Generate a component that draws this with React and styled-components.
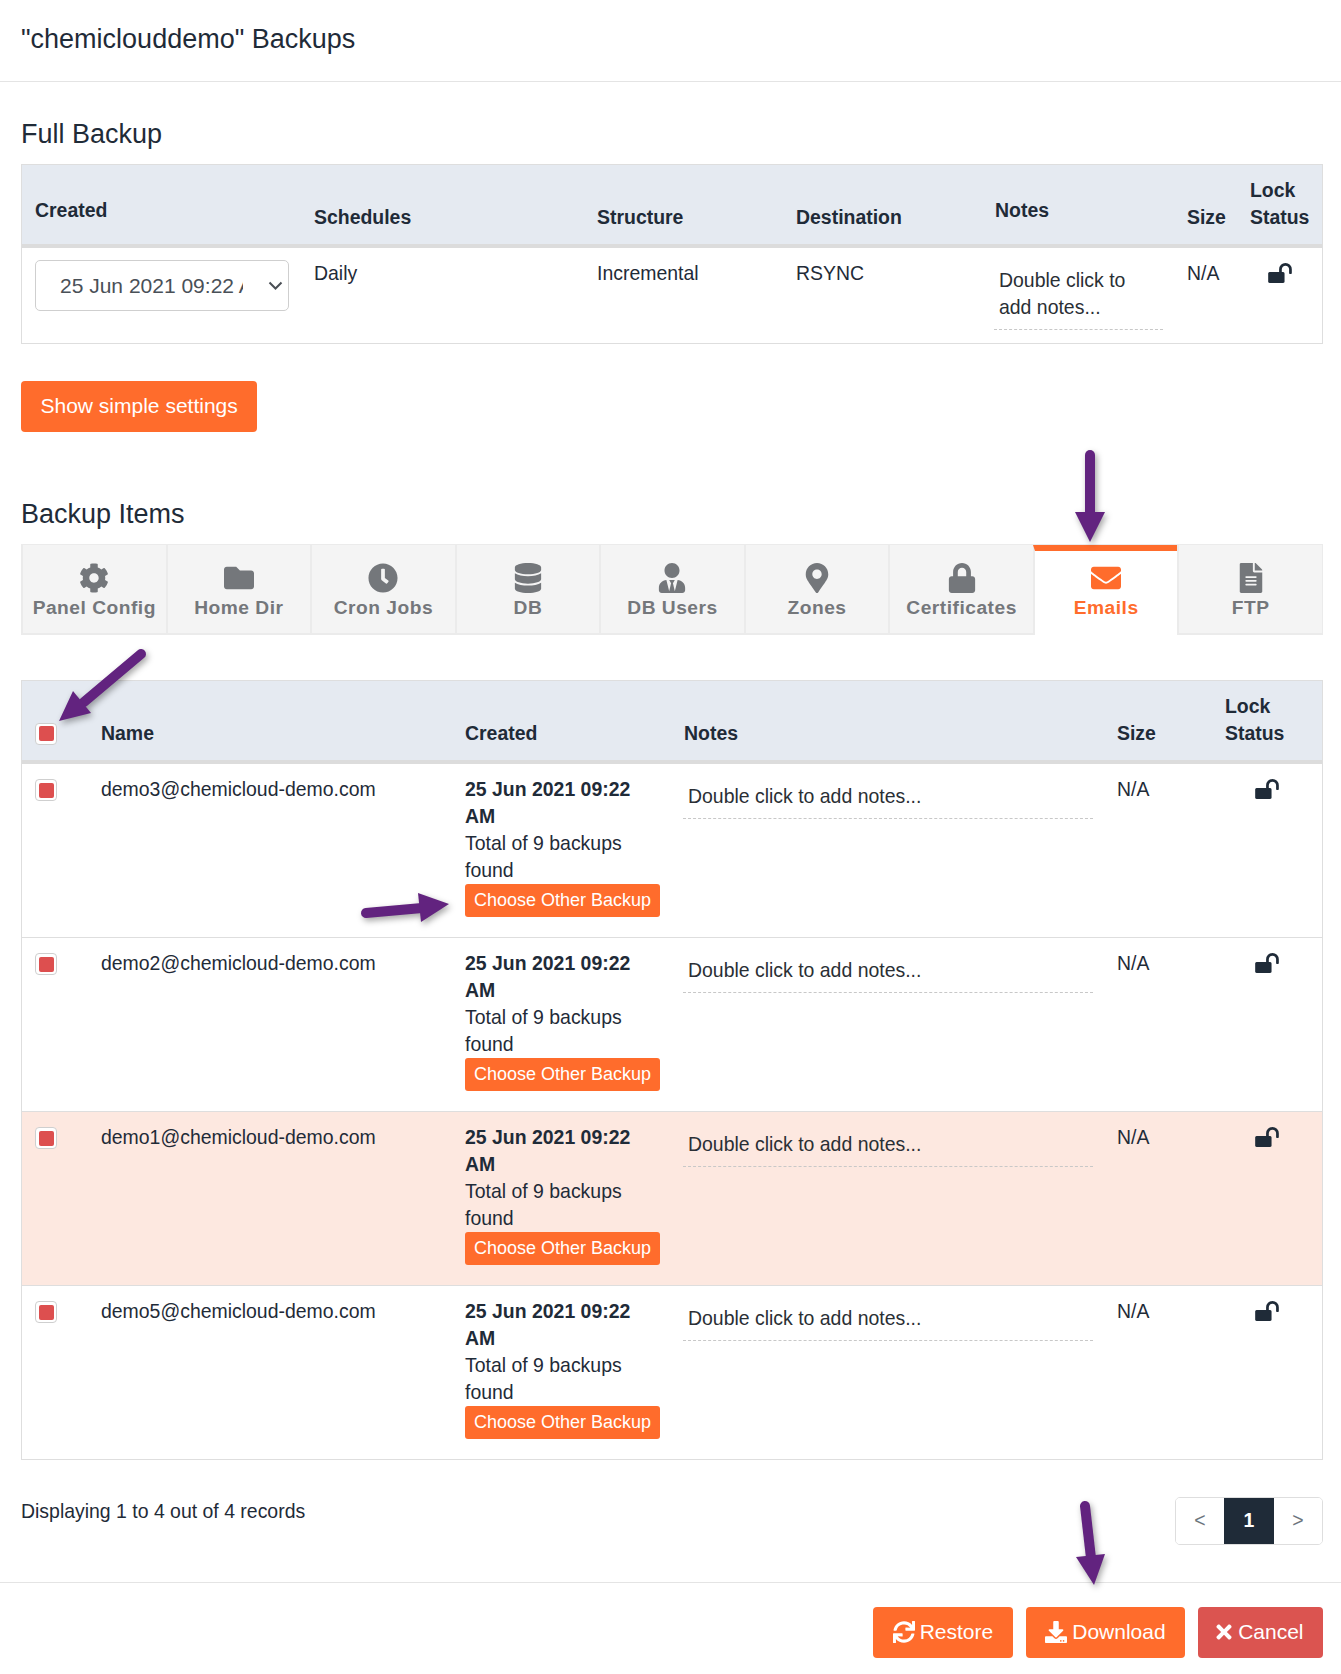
import React from "react"
import styled, { createGlobalStyle } from "styled-components"
import {
  FaCog, FaFolder, FaClock, FaDatabase, FaUserTie, FaMapMarkerAlt, FaLock,
  FaEnvelope, FaFileAlt, FaSync, FaDownload, FaTimes,
} from "react-icons/fa"

const orange = "#ff6c2c"
const ink = "#1f2b38"

const GlobalStyle = createGlobalStyle`
  html, body { margin: 0; padding: 0; background: #fff; }
  body {
    font-family: "Liberation Sans", Arial, sans-serif;
    font-size: 19.45px;
    line-height: 27px;
    color: ${ink};
  }
  * { box-sizing: border-box; }
`

const Page = styled.div`
  position: relative;
  width: 1341px;
  height: 1674px;
  overflow: hidden;
`

const Header = styled.header`
  height: 82px;
  padding: 22px 21px 0;
  border-bottom: 1px solid #e4e4e4;
`

const PageTitle = styled.h1`
  margin: 0;
  font-size: 27px;
  line-height: 34px;
  font-weight: 400;
`

const Body = styled.main`
  padding: 35px 18px 0 21px;
`

const SectionTitle = styled.h2`
  margin: ${(p) => p.$top || 0}px 0 13px;
  font-size: 27px;
  line-height: 34px;
  font-weight: 400;
`

const Table = styled.table`
  width: 100%;
  table-layout: fixed;
  border-collapse: separate;
  border-spacing: 0;
  border: 1px solid #dedede;
  margin-top: ${(p) => p.$top || 0}px;
`

const Th = styled.th`
  background: #e5eaf1;
  border-bottom: 4px solid #dcdcdc;
  padding: 12px 13px ${(p) => (p.$raised ? 20 : 13)}px;
  text-align: left;
  vertical-align: bottom;
  font-weight: 700;
  font-size: 19.45px;
  line-height: 27px;
`

const Td = styled.td`
  padding: 12.5px 13px 19.5px;
  vertical-align: top;
  text-align: ${(p) => (p.$center ? "center" : "left")};
  background: ${(p) => (p.$hot ? "#fde8e0" : "transparent")};
  border-top: ${(p) => (p.$line ? "1px solid #dedede" : "0")};
`

const SummaryTd = styled(Td)`
  padding-top: 11.5px;
  padding-bottom: 13px;
`

const SelectWrap = styled.div`
  position: relative;
  width: 254px;
  height: 51px;
`

const DateSelect = styled.select`
  width: 100%;
  height: 100%;
  appearance: none;
  background: #fff;
  border: 1px solid #cfcfcf;
  border-radius: 5px;
  padding: 0 45px 0 24px;
  font: 400 21px "Liberation Sans", Arial, sans-serif;
  color: #495057;
`

const Chevron = styled.svg`
  position: absolute;
  right: 6px;
  top: 21px;
  width: 15px;
  height: 9px;
  fill: none;
  stroke: #4a4f55;
  stroke-width: 2;
  pointer-events: none;
`

const Notes = styled.div`
  margin: 0 -2px 0 -1px;
  padding: 7px 5px 8px;
  border-bottom: 1px dashed #c8c8c8;
  color: #2a2f35;
`

const LockSvg = styled.svg`
  display: inline-block;
  width: 24px;
  height: 20px;
  margin-top: 3px;
  fill: ${ink};
`

const UnlockIcon = () => (
  <LockSvg viewBox="0 128 1664 1408">
    <path d="M1664 576v256q0 26-19 45t-45 19h-64q-26 0-45-19t-19-45v-256q0-106-75-181t-181-75-181 75-75 181v192h96q40 0 68 28t28 68v576q0 40-28 68t-68 28h-960q-40 0-68-28t-28-68v-576q0-40 28-68t68-28h672v-192q0-185 131.5-316.5t316.5-131.5 316.5 131.5 131.5 316.5z" />
  </LockSvg>
)

const PrimaryButton = styled.button`
  display: flex;
  align-items: center;
  justify-content: center;
  gap: ${(p) => (p.$danger ? 3 : 5)}px;
  height: 51px;
  width: fit-content;
  padding: 0 19.5px 0 ${(p) => (p.$danger ? 15 : 19.5)}px;
  margin-top: ${(p) => p.$top || 0}px;
  border: 0;
  border-radius: 4px;
  background: ${(p) => (p.$danger ? "#db5450" : orange)};
  color: #fff;
  font: 400 21px "Liberation Sans", Arial, sans-serif;
  white-space: nowrap;

  svg { width: auto; height: 22px; }
`

const SmallButton = styled.button`
  display: block;
  height: 33px;
  padding: 0 9px;
  border: 0;
  border-radius: 3px;
  background: ${orange};
  color: #fff;
  font: 400 18px "Liberation Sans", Arial, sans-serif;
  white-space: nowrap;
`

const Tabs = styled.div`
  display: grid;
  grid-template-columns: repeat(9, 1fr);
  height: 91px;
  border: 1px solid #ebebeb;
  border-width: 1px 1px 0 0;
`

const Tab = styled.div`
  display: flex;
  flex-direction: column;
  align-items: center;
  padding-top: ${(p) => (p.$active ? 12 : 18)}px;
  background: ${(p) => (p.$active ? "#fff" : "#f4f4f4")};
  color: ${(p) => (p.$active ? orange : "#74777b")};
  border-left: 2px solid #ebebeb;
  border-bottom: ${(p) => (p.$active ? "0" : "2px solid #ebebeb")};
  border-top: ${(p) => (p.$active ? `6px solid ${orange}` : "0")};
  font-weight: 700;
  font-size: 19.2px;
  letter-spacing: 0.5px;
  white-space: nowrap;

  svg { height: 30px; width: 32px; margin-bottom: 1px; }
`

const Checkbox = styled.span`
  display: flex;
  align-items: center;
  justify-content: center;
  width: 22px;
  height: 22px;
  margin-top: ${(p) => p.$top ?? 3}px;
  background: #fff;
  border: 1px solid #cfcfcf;
  border-radius: 4px;

  &::after {
    content: "";
    width: 15px;
    height: 15px;
    border-radius: 2px;
    background: #dd4f4f;
  }
`

const BoxTh = styled(Th)`
  padding-bottom: 15px;
`

const TableFoot = styled.div`
  display: flex;
  justify-content: space-between;
  align-items: flex-start;
  margin-top: 38px;
`

const Pager = styled.div`
  display: flex;
  height: 48px;
  margin-top: -1px;
  border: 1px solid #dedede;
  border-radius: 5px;
  overflow: hidden;
`

const PageCell = styled.span`
  display: flex;
  align-items: center;
  justify-content: center;
  width: ${(p) => (p.$current ? 50 : 48)}px;
  background: ${(p) => (p.$current ? ink : "#fff")};
  color: ${(p) => (p.$current ? "#fff" : "#6c757d")};
  font-weight: ${(p) => (p.$current ? 700 : 400)};
`

const Footer = styled.footer`
  display: flex;
  justify-content: flex-end;
  gap: 13px;
  margin-top: 37px;
  padding: 24px 18px 0 0;
  border-top: 1px solid #e4e4e4;
`

const Overlay = styled.svg`
  position: absolute;
  top: 0;
  left: 0;
  pointer-events: none;
  filter: drop-shadow(2px 3px 3px rgba(0, 0, 0, 0.35));
`

const tabs = [
  { label: "Panel Config", Icon: FaCog },
  { label: "Home Dir", Icon: FaFolder },
  { label: "Cron Jobs", Icon: FaClock },
  { label: "DB", Icon: FaDatabase },
  { label: "DB Users", Icon: FaUserTie },
  { label: "Zones", Icon: FaMapMarkerAlt },
  { label: "Certificates", Icon: FaLock },
  { label: "Emails", Icon: FaEnvelope, active: true },
  { label: "FTP", Icon: FaFileAlt },
]

const emails = [
  { name: "demo3@chemicloud-demo.com" },
  { name: "demo2@chemicloud-demo.com" },
  { name: "demo1@chemicloud-demo.com", hot: true },
  { name: "demo5@chemicloud-demo.com" },
]

const arrows = [
  { from: [1090, 455], neck: [1090, 514], tip: [1090, 542], a: [1075, 512], b: [1105, 512] },
  { from: [141, 654], neck: [84, 702], tip: [59, 721], a: [73, 691], b: [91, 713] },
  { from: [366, 913], neck: [422, 908], tip: [449, 904], a: [418, 893], b: [421, 922] },
  { from: [1085, 1506], neck: [1091, 1558], tip: [1094, 1585], a: [1076, 1557], b: [1105, 1554] },
]

const App = () => (
  <Page>
    <GlobalStyle />
    <Header>
      <PageTitle>"chemiclouddemo" Backups</PageTitle>
    </Header>
    <Body>
      <SectionTitle>Full Backup</SectionTitle>
      <Table>
        <colgroup>
          <col width="279" />
          <col width="283" />
          <col width="199" />
          <col width="199" />
          <col width="192" />
          <col width="63" />
          <col width="85" />
        </colgroup>
        <thead>
          <tr>
            <Th $raised>Created</Th>
            <Th>Schedules</Th>
            <Th>Structure</Th>
            <Th>Destination</Th>
            <Th $raised>Notes</Th>
            <Th>Size</Th>
            <Th>Lock Status</Th>
          </tr>
        </thead>
        <tbody>
          <tr>
            <SummaryTd>
              <SelectWrap>
                <DateSelect defaultValue="a">
                  <option value="a">25 Jun 2021 09:22 AM</option>
                </DateSelect>
                <Chevron viewBox="0 0 15 9"><polyline points="1.5,1.5 7.5,7.5 13.5,1.5" /></Chevron>
              </SelectWrap>
            </SummaryTd>
            <SummaryTd>Daily</SummaryTd>
            <SummaryTd>Incremental</SummaryTd>
            <SummaryTd>RSYNC</SummaryTd>
            <SummaryTd>
              <Notes>Double click to add notes...</Notes>
            </SummaryTd>
            <SummaryTd>N/A</SummaryTd>
            <SummaryTd $center><UnlockIcon /></SummaryTd>
          </tr>
        </tbody>
      </Table>

      <PrimaryButton $top={37}>Show simple settings</PrimaryButton>

      <SectionTitle $top={65}>Backup Items</SectionTitle>
      <Tabs>
        {tabs.map(({ label, Icon, active }) => (
          <Tab key={label} $active={active}>
            <Icon />
            {label}
          </Tab>
        ))}
      </Tabs>

      <Table $top={45}>
        <colgroup>
          <col width="66" />
          <col width="364" />
          <col width="219" />
          <col width="433" />
          <col width="108" />
          <col width="110" />
        </colgroup>
        <thead>
          <tr>
            <BoxTh><Checkbox $top={0} /></BoxTh>
            <Th>Name</Th>
            <Th>Created</Th>
            <Th>Notes</Th>
            <Th>Size</Th>
            <Th>Lock Status</Th>
          </tr>
        </thead>
        <tbody>
          {emails.map((row, i) => (
            <tr key={row.name}>
              <Td $hot={row.hot} $line={i > 0}><Checkbox /></Td>
              <Td $hot={row.hot} $line={i > 0}>{row.name}</Td>
              <Td $hot={row.hot} $line={i > 0}>
                <strong>25 Jun 2021 09:22 AM</strong>
                <br />
                Total of 9 backups found
                <SmallButton>Choose Other Backup</SmallButton>
              </Td>
              <Td $hot={row.hot} $line={i > 0}>
                <Notes>Double click to add notes...</Notes>
              </Td>
              <Td $hot={row.hot} $line={i > 0}>N/A</Td>
              <Td $hot={row.hot} $line={i > 0} $center><UnlockIcon /></Td>
            </tr>
          ))}
        </tbody>
      </Table>

      <TableFoot>
        <span>Displaying 1 to 4 out of 4 records</span>
        <Pager>
          <PageCell>&lt;</PageCell>
          <PageCell $current>1</PageCell>
          <PageCell>&gt;</PageCell>
        </Pager>
      </TableFoot>
    </Body>
    <Footer>
      <PrimaryButton><FaSync />Restore</PrimaryButton>
      <PrimaryButton><FaDownload />Download</PrimaryButton>
      <PrimaryButton $danger><FaTimes />Cancel</PrimaryButton>
    </Footer>
    <Overlay width="1341" height="1674" viewBox="0 0 1341 1674">
      {arrows.map(({ from, neck, tip, a, b }) => (
        <g key={tip.join()} fill="#62237f" stroke="#62237f">
          <line x1={from[0]} y1={from[1]} x2={neck[0]} y2={neck[1]} strokeWidth="10" strokeLinecap="round" />
          <polygon points={`${tip} ${a} ${b}`} strokeWidth="0" />
        </g>
      ))}
    </Overlay>
  </Page>
)

export default App
